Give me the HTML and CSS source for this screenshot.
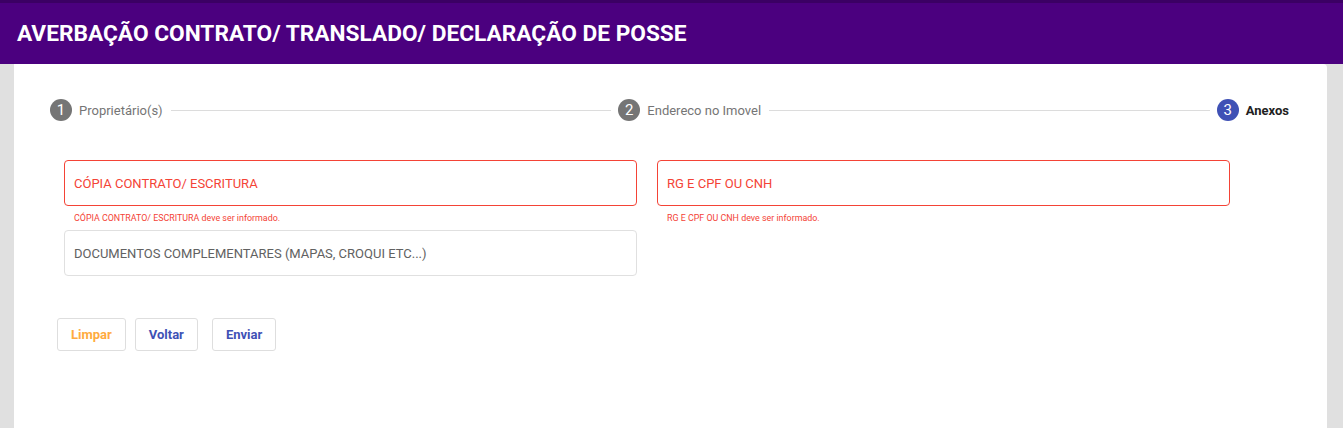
FILE: index.html
```html
<!DOCTYPE html>
<html lang="pt">
<head>
<meta charset="utf-8">
<link rel="stylesheet" href="styles.css">
</head>
<body>
<header class="topbar">
  <h1 class="title">AVERBAÇÃO CONTRATO/ TRANSLADO/ DECLARAÇÃO DE POSSE</h1>
</header>
<main class="card">
  <div class="stepper">
    <div class="step">
      <span class="step-num">1</span><span class="step-label">Proprietário(s)</span>
    </div>
    <div class="step-line"></div>
    <div class="step">
      <span class="step-num">2</span><span class="step-label">Endereco no Imovel</span>
    </div>
    <div class="step-line"></div>
    <div class="step step-active">
      <span class="step-num">3</span><span class="step-label">Anexos</span>
    </div>
  </div>

  <div class="form-grid">
    <div class="field-wrap">
      <div class="field field-error">CÓPIA CONTRATO/ ESCRITURA</div>
      <div class="hint">CÓPIA CONTRATO/ ESCRITURA deve ser informado.</div>
    </div>
    <div class="field-wrap">
      <div class="field field-error">RG E CPF OU CNH</div>
      <div class="hint">RG E CPF OU CNH deve ser informado.</div>
    </div>
    <div class="field-wrap field-wrap-last">
      <div class="field">DOCUMENTOS COMPLEMENTARES (MAPAS, CROQUI ETC...)</div>
    </div>
  </div>

  <div class="actions">
    <button class="btn btn-warn">Limpar</button>
    <button class="btn btn-primary">Voltar</button>
    <button class="btn btn-primary btn-gap">Enviar</button>
  </div>
</main>
</body>
</html>
```

FILE: styles.css
```css
html, body {
  margin: 0;
  padding: 0;
  height: 100%;
}
body {
  background: #e0e0e0;
  font-family: Roboto, "Liberation Sans", Arial, sans-serif;
  overflow: hidden;
}
.topbar {
  height: 64px;
  box-sizing: border-box;
  background: #4b007f;
  border-top: 3px solid #3b0064;
  display: flex;
  align-items: center;
  padding: 0 17px 0;
}
.title {
  margin: 0;
  color: #fff;
  font-size: 22.7px;
  font-weight: 700;
  letter-spacing: 0;
}
.card {
  background: #fff;
  margin: 0 16px 0 14px;
  height: calc(100% - 64px);
  padding: 35px 38px 0 36px;
  box-sizing: border-box;
  border-top-right-radius: 4px;
}
.stepper {
  display: flex;
  align-items: center;
  height: 22px;
}
.step {
  display: flex;
  align-items: center;
}
.step-num {
  width: 22px;
  height: 22px;
  border-radius: 50%;
  background: #757575;
  color: #fff;
  font-size: 15px;
  display: flex;
  align-items: center;
  justify-content: center;
}
.step-label {
  margin-left: 7px;
  font-size: 13px;
  color: #757575;
}
.step-active .step-num {
  background: #3f51b5;
}
.step-active .step-label {
  color: #212121;
  font-weight: 700;
}
.step-line {
  flex: 1;
  height: 1px;
  background: #dcdcdc;
  margin: 0 7px 0 8px;
}
.form-grid {
  display: grid;
  grid-template-columns: 573px 573px;
  column-gap: 20px;
  margin: 39px 0 0 14px;
}
.field-wrap {
  height: 70px;
}
.field-wrap-last {
  height: 46px;
}
.field {
  height: 46px;
  box-sizing: border-box;
  border: 1px solid #e0e0e0;
  border-radius: 4px;
  display: flex;
  align-items: center;
  padding: 0 10px 0 9px;
  font-size: 13px;
  color: #616161;
}
.field-error {
  border-color: #f44336;
  color: #f44336;
}
.hint {
  font-size: 8.9px;
  color: #f44336;
  padding: 7px 0 0 10px;
}
.actions {
  display: flex;
  margin: 42px 0 0 7px;
  gap: 9px;
}
.btn {
  height: 33px;
  box-sizing: border-box;
  background: #fff;
  border: 1px solid #dedede;
  border-radius: 3px;
  font-family: inherit;
  font-size: 13px;
  font-weight: 700;
  padding: 0 13px;
  cursor: pointer;
}
.btn-warn {
  color: #ffab40;
}
.btn-primary {
  color: #3f51b5;
}
.btn-gap {
  margin-left: 5px;
}
```
